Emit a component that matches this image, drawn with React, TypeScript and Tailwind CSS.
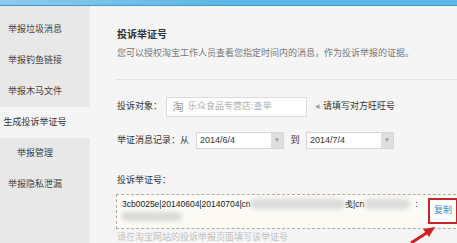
import React from 'react';

const cjk = { fontFamily: '"Liberation Sans", "Noto Sans CJK SC", sans-serif' };

const navItems = ['举报垃圾消息', '举报钓鱼链接', '举报木马文件', '生成投诉举证号', '举报管理', '举报隐私泄漏'];

function Blur({ w, h = 10 }: { w: number; h?: number }) {
  return (
    <span
      className="inline-block rounded-full bg-[#d9d9d9] blur-[2px] align-middle"
      style={{ width: w, height: h }}
    />
  );
}

function DateSelect({ value }: { value: string }) {
  return (
    <div className="flex h-[17px] w-[88px] items-stretch border border-[#d6d6d6] bg-white">
      <span className="flex-1 pl-[3px] text-[9px] leading-[15px] text-[#333]">{value}</span>
      <span className="flex w-[12px] items-center justify-center bg-[#dedede] text-[6px] text-[#999]">▼</span>
    </div>
  );
}

export default function App() {
  return (
    <div className="flex h-[243px] w-[457px] flex-col overflow-hidden bg-[#f5f5f5]" style={cjk}>
      {/* top bar */}
      <div className="h-[6px] shrink-0 border-b border-[#3f9cce] bg-gradient-to-r from-[#8ccbec] via-[#5ab6e4] to-[#5ab6e4]" />

      <div className="flex flex-1">
        {/* sidebar */}
        <div className="w-[90px] shrink-0 bg-[#e8e8e8] pt-[8px]">
          {navItems.map((item) => (
            <div
              key={item}
              className={
                'flex h-[31px] items-center justify-center pr-[20px] text-[9px] ' +
                (item === '生成投诉举证号' ? 'bg-[#f5f5f5] text-[#333]' : 'text-[#444]')
              }
            >
              {item}
            </div>
          ))}
        </div>

        {/* main */}
        <div className="relative flex-1 pl-[26px] pt-[22px]">
          <div className="pl-px text-[10px] font-bold leading-[14px] text-[#333]">投诉举证号</div>
          <div className="mt-[4px] whitespace-nowrap pl-px text-[9px] leading-[14px] text-[#777]">
            您可以授权淘宝工作人员查看您指定时间内的消息，作为投诉举报的证据。
          </div>
          <div className="mt-[19px] h-px w-[360px] bg-[#e2e2e2]" />

          {/* target */}
          <div className="mt-[17px] flex items-center pl-px">
            <span className="w-[49px] text-[9px] text-[#333]">投诉对象：</span>
            <div className="flex h-[20px] w-[141px] items-center border border-[#dcdcdc] bg-white">
              <span className="ml-[2px] w-[18px] text-center text-[11px] leading-none text-[#9a9a9a]">淘</span>
              <span className="ml-[1px] text-[9px] text-[#b0b0b0]">乐众食品专营店:查单</span>
            </div>
            <span className="ml-[8px] text-[5px] text-[#999]">◀</span>
            <span className="ml-[3px] text-[9px] text-[#333]">请填写对方旺旺号</span>
          </div>

          {/* date range */}
          <div className="mt-[15px] flex items-center pl-px">
            <span className="w-[79px] whitespace-nowrap text-[9px] text-[#333]">举证消息记录：从</span>
            <DateSelect value="2014/6/4" />
            <span className="w-[22px] text-center text-[9px] text-[#333]">到</span>
            <DateSelect value="2014/7/4" />
          </div>

          <div className="mt-[24px] pl-px text-[9px] leading-[14px] text-[#333]">投诉举证号：</div>

          {/* code box */}
          <div className="mt-[7px] flex h-[35px] w-[345px] border border-dashed border-[#b5ab9a] bg-[#fbfaf4]">
            <div className="flex-1 pl-[5px] pt-[2px]">
              <div className="flex items-center whitespace-nowrap text-[8.5px] leading-[14px] text-[#222]">
                <span>3cb0025e|20140604|20140704|cn</span>
                <Blur w={94} />
                <span>戋|cn</span>
                <Blur w={46} />
                <span className="ml-[5px]">:</span>
              </div>
              <div className="mt-[1px] flex">
                <Blur w={60} h={9} />
              </div>
            </div>
            <div className="mr-[2px] mt-[3px] flex h-[26px] w-[30px] items-center justify-center border-2 border-[#c4242a] bg-white text-[9px] text-[#3b8ec6]">
              复制
            </div>
          </div>

          <div className="mt-[1px] pl-px text-[9px] leading-[14px] text-[#c2c2c2]">请在淘宝网站的投诉举报页面填写该举证号</div>

          {/* red arrow */}
          <svg className="absolute left-[318px] top-[218px]" width="30" height="20" viewBox="0 0 30 20">
            <line x1="3" y1="19" x2="20" y2="8" stroke="#d21f1f" strokeWidth="3" />
            <polygon points="27,3 15,5 21,13" fill="#d21f1f" />
          </svg>
        </div>
      </div>
    </div>
  );
}
